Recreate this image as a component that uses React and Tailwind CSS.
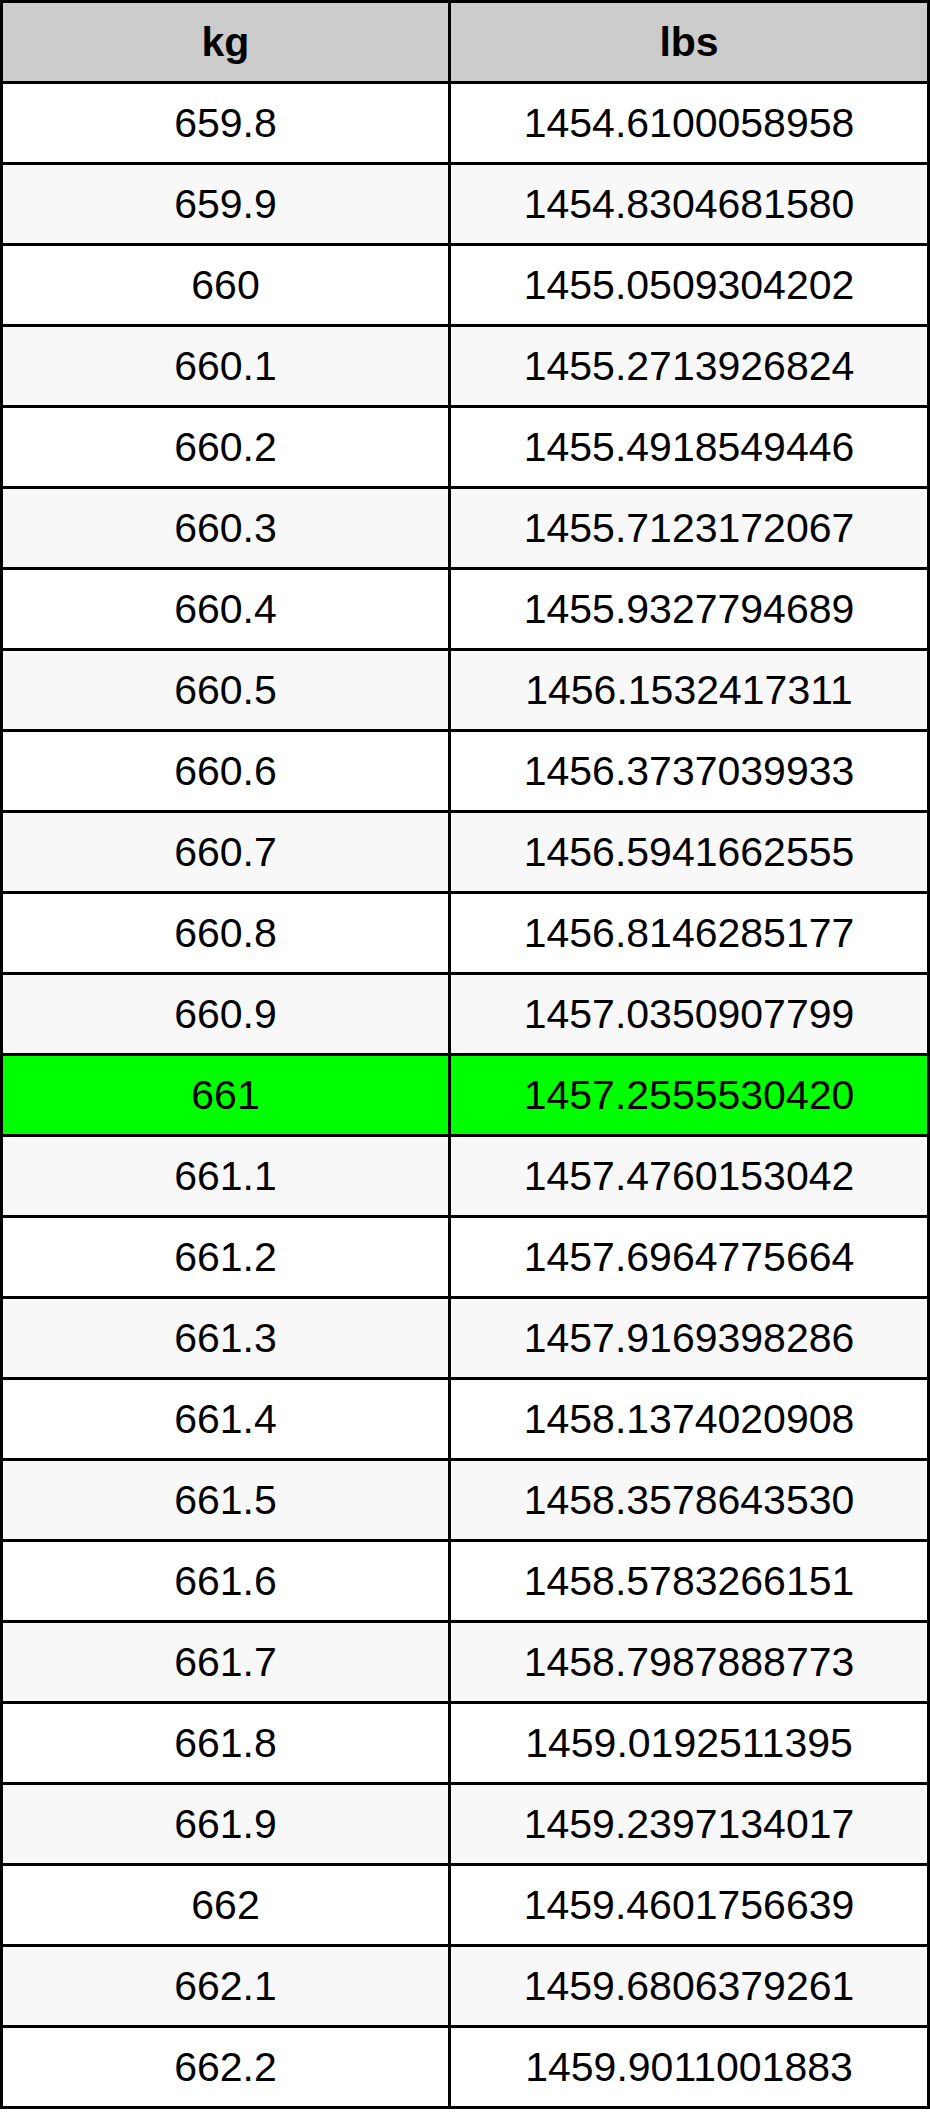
import React from "react";

const rows = [
  ["659.8", "1454.6100058958"],
  ["659.9", "1454.8304681580"],
  ["660", "1455.0509304202"],
  ["660.1", "1455.2713926824"],
  ["660.2", "1455.4918549446"],
  ["660.3", "1455.7123172067"],
  ["660.4", "1455.9327794689"],
  ["660.5", "1456.1532417311"],
  ["660.6", "1456.3737039933"],
  ["660.7", "1456.5941662555"],
  ["660.8", "1456.8146285177"],
  ["660.9", "1457.0350907799"],
  ["661", "1457.2555530420"],
  ["661.1", "1457.4760153042"],
  ["661.2", "1457.6964775664"],
  ["661.3", "1457.9169398286"],
  ["661.4", "1458.1374020908"],
  ["661.5", "1458.3578643530"],
  ["661.6", "1458.5783266151"],
  ["661.7", "1458.7987888773"],
  ["661.8", "1459.0192511395"],
  ["661.9", "1459.2397134017"],
  ["662", "1459.4601756639"],
  ["662.1", "1459.6806379261"],
  ["662.2", "1459.9011001883"],
];

function Row({ kg, lbs, bg, bold }) {
  return (
    <div className={`flex h-[81px] border-b-[3px] border-black ${bg}`}>
      <div className={`w-[448px] border-r-[3px] border-black flex items-center justify-center ${bold ? "font-bold" : ""}`}>
        {kg}
      </div>
      <div className={`w-[476px] flex items-center justify-center ${bold ? "font-bold" : ""}`}>
        {lbs}
      </div>
    </div>
  );
}

export default function App() {
  return (
    <div className="w-[930px] bg-white" style={{ fontFamily: '"Liberation Sans", Arial, sans-serif' }}>
      <div className="border-[3px] border-b-0 border-black text-black text-[41px] leading-none">
        <Row kg="kg" lbs="lbs" bg="bg-[#cccccc]" bold />
        {rows.map(([kg, lbs], i) => (
          <Row
            key={kg}
            kg={kg}
            lbs={lbs}
            bg={kg === "661" ? "bg-[#00ff00]" : i % 2 === 1 ? "bg-[#f8f8f8]" : "bg-white"}
          />
        ))}
      </div>
    </div>
  );
}
